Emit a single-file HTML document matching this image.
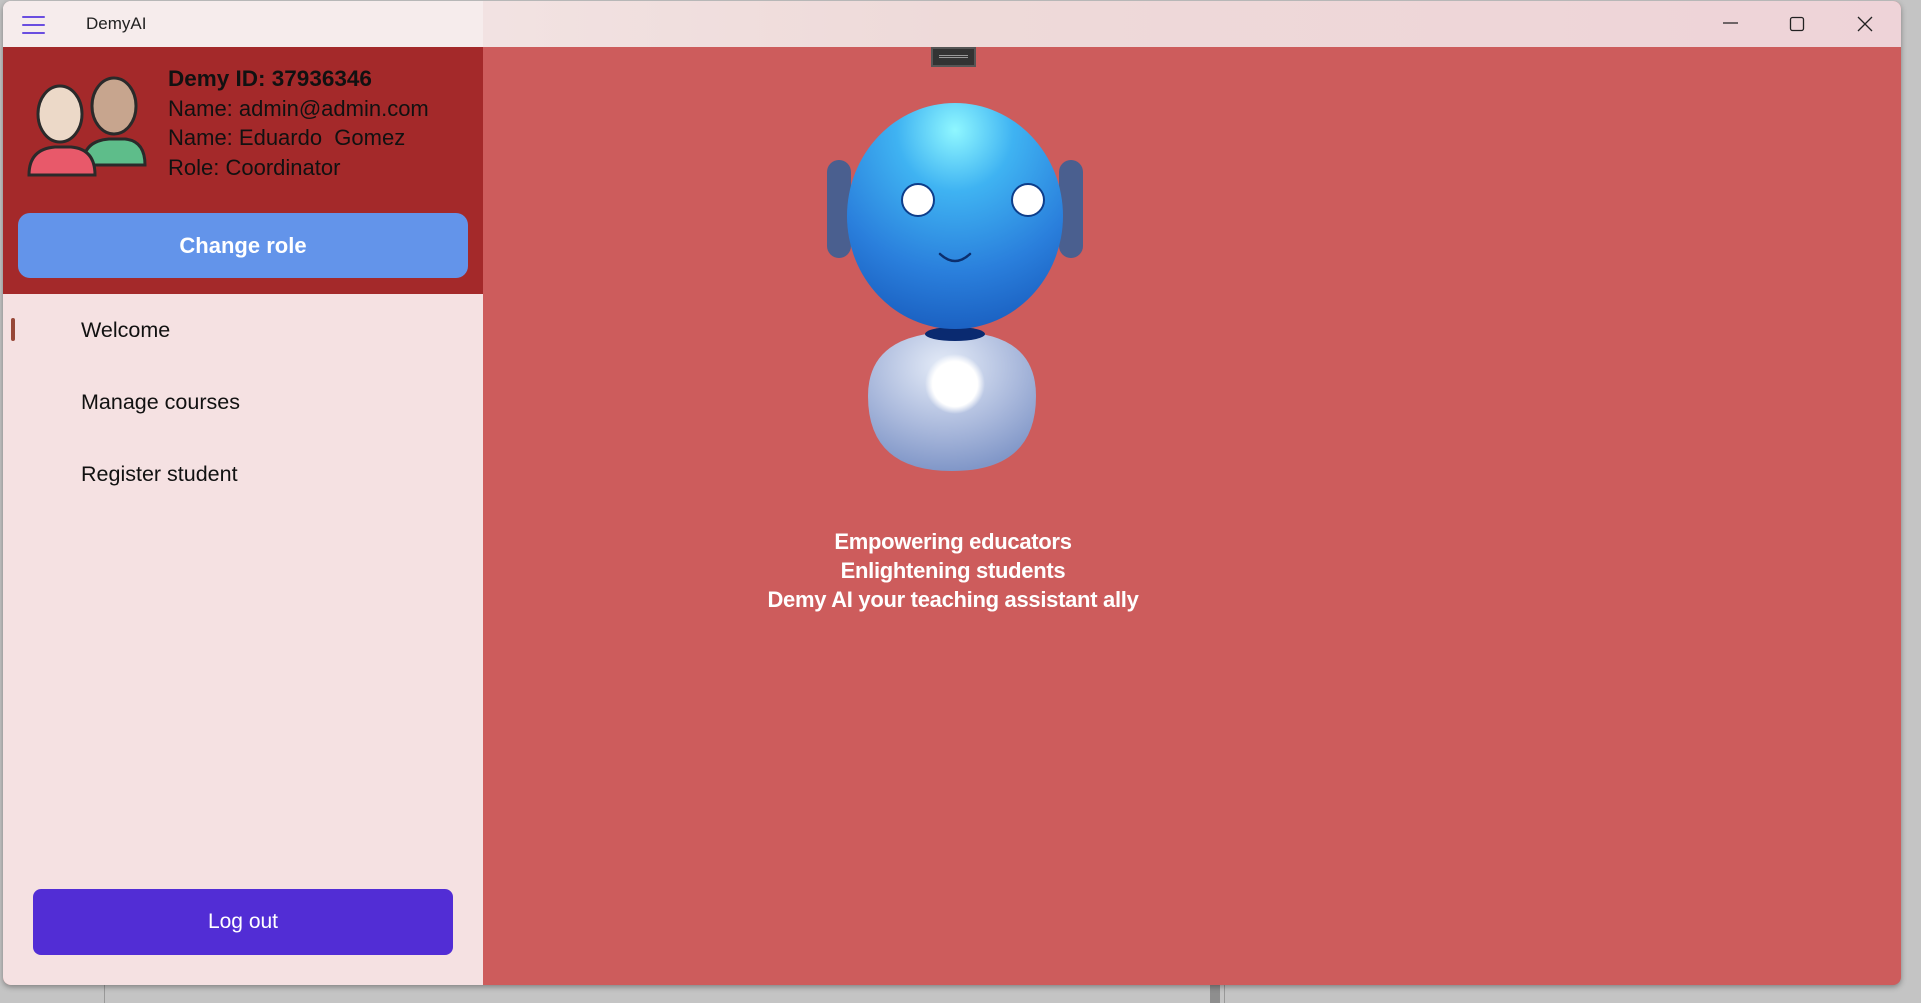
<!DOCTYPE html>
<html><head><meta charset="utf-8"><style>
*{margin:0;padding:0;box-sizing:border-box}
body{width:1921px;height:1003px;overflow:hidden;background:#c4c4c4;font-family:"Liberation Sans",sans-serif;position:relative}
.bgline{position:absolute;top:985px;height:18px;width:1px;background:#999}
.win{position:absolute;left:3px;top:1px;width:1898px;height:984px;border-radius:8px;overflow:hidden;background:#cd5c5c;box-shadow:0 2px 6px rgba(0,0,0,.35)}
.title{position:absolute;left:0;top:0;width:100%;height:46px;background:linear-gradient(90deg,#f6ebeb,#eedad9 50%,#eed3d8)}
.ham{position:absolute;left:19px;top:15px;width:23px}
.ham i{display:block;height:2px;background:#6a4ee0;margin-bottom:6px;border-radius:1px}
.apptitle{position:absolute;left:83px;top:13px;font-size:17px;color:#222}
.side{position:absolute;left:0;top:0;width:480px;height:984px;background:#f5e1e2}
.side .title{width:480px;background:#f6ecec}
.head{position:absolute;left:0;top:46px;width:480px;height:247px;background:#a4292a}
.info{position:absolute;left:165px;top:17px;font-size:22px;line-height:29.5px;color:#111}
.info b{font-size:22.5px}
.btn{position:absolute;left:15px;top:166px;width:450px;height:65px;border-radius:12px;background:#6394ea;color:#fff;font-weight:bold;font-size:22px;text-align:center;line-height:65px}
.nav{position:absolute;left:78px;font-size:21.5px;color:#111}
.ind{position:absolute;left:8px;top:317px;width:4px;height:23px;border-radius:2px;background:#974838}
.logout{position:absolute;left:30px;top:888px;width:420px;height:66px;border-radius:8px;background:#522dd5;color:#fff;font-size:21px;text-align:center;line-height:66px}
.tag{position:absolute;left:650px;width:600px;text-align:center;color:#fff;font-weight:bold;font-size:22px;letter-spacing:-.3px}
</style></head><body>
<div class="bgline" style="left:104px"></div><div class="bgline" style="left:1210px;width:10px;background:#8e8e8e"></div><div class="bgline" style="left:1224px"></div>
<div class="win">
 <div class="title"></div>
 <svg style="position:absolute;left:1715px;top:12px" width="170" height="22">
  <line x1="5" y1="10" x2="20" y2="10" stroke="#222" stroke-width="1.3"/>
  <rect x="72.5" y="4.5" width="13" height="13" rx="2" fill="none" stroke="#222" stroke-width="1.3"/>
  <path d="M140 4L154 18M154 4L140 18" stroke="#222" stroke-width="1.3"/>
 </svg>
 <div style="position:absolute;left:928px;top:46px;width:45px;height:20px;background:#333;border:2px solid #555"><div style="margin:6px 6px;height:3px;border-top:1px solid #999;border-bottom:1px solid #999"></div></div>
 <svg style="position:absolute;left:817px;top:95px" width="270" height="390">
  <defs>
   <radialGradient id="hg" cx="50%" cy="12%" r="90%"><stop offset="0" stop-color="#8ff7ff"/><stop offset=".3" stop-color="#3fb3f2"/><stop offset=".7" stop-color="#2a7fdc"/><stop offset="1" stop-color="#1a5fc0"/></radialGradient>
   <radialGradient id="bg" cx="45%" cy="25%" r="75%"><stop offset="0" stop-color="#e5ecf8"/><stop offset=".6" stop-color="#aab9dc"/><stop offset="1" stop-color="#8197c8"/></radialGradient>
   <radialGradient id="gl" cx="50%" cy="50%" r="50%"><stop offset=".75" stop-color="#fff"/><stop offset="1" stop-color="#fff" stop-opacity="0"/></radialGradient>
  </defs>
  <path d="M48 300Q48 236 135 236Q216 236 216 300Q216 375 132 375Q48 375 48 300Z" fill="url(#bg)"/>
  <ellipse cx="135" cy="238" rx="30" ry="7" fill="#0a2a70"/>
  <rect x="7" y="64" width="24" height="98" rx="12" fill="#4a5f8f"/>
  <rect x="239" y="64" width="24" height="98" rx="12" fill="#4a5f8f"/>
  <ellipse cx="135" cy="120" rx="108" ry="113" fill="url(#hg)"/>
  <circle cx="98" cy="104" r="16" fill="#fff" stroke="#0d3d8a" stroke-width="2"/>
  <circle cx="208" cy="104" r="16" fill="#fff" stroke="#0d3d8a" stroke-width="2"/>
  <path d="M120 158Q135 172 150 158" fill="none" stroke="#0c2f6e" stroke-width="2.5" stroke-linecap="round"/>
  <circle cx="135" cy="288" r="30" fill="url(#gl)"/>
 </svg>
 <div class="tag" style="top:528px">Empowering educators</div>
 <div class="tag" style="top:557px">Enlightening students</div>
 <div class="tag" style="top:586px">Demy AI your teaching assistant ally</div>

 <div class="side">
  <div class="title"></div>
  <div class="ham"><i></i><i></i><i></i></div>
  <div class="apptitle">DemyAI</div>
  <div class="head">
   <svg style="position:absolute;left:24px;top:24px" width="122" height="106">
    <g stroke="#2a2a2a" stroke-width="3">
     <path d="M56 94Q56 70 82 68L98 68Q118 70 118 94Z" fill="#5ebd8a"/>
     <ellipse cx="87" cy="35" rx="22" ry="28" fill="#c7a58e"/>
     <path d="M2 104Q2 78 28 76L44 76Q68 78 68 104Z" fill="#e8596a"/>
     <ellipse cx="33" cy="43" rx="22" ry="28" fill="#ecd9c8"/>
    </g>
   </svg>
   <div class="info"><b>Demy ID: 37936346</b><br>Name: admin@admin.com<br>Name: Eduardo&nbsp; Gomez<br>Role: Coordinator</div>
   <div class="btn">Change role</div>
  </div>
  <div class="ind"></div>
  <div class="nav" style="top:317px">Welcome</div>
  <div class="nav" style="top:389px">Manage courses</div>
  <div class="nav" style="top:461px">Register student</div>
  <div class="logout">Log out</div>
 </div>
</div>
</body></html>
